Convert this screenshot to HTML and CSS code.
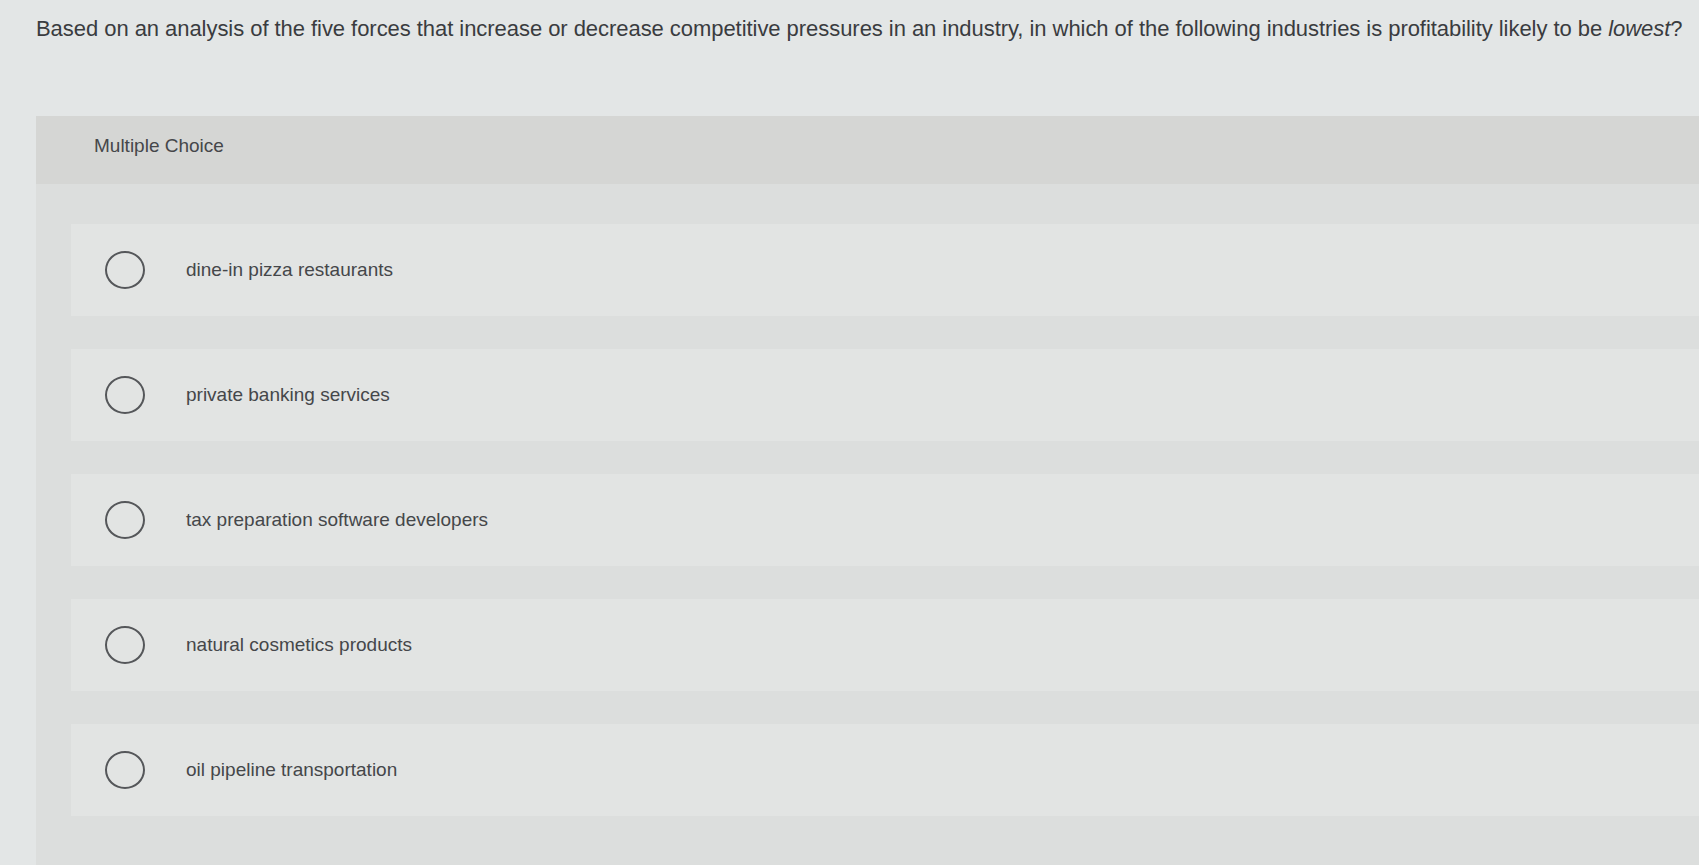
FILE: index.html
```html
<!DOCTYPE html>
<html>
<head>
<meta charset="utf-8">
<link rel="stylesheet" href="styles.css">
</head>
<body>
<div class="page">
  <p class="question">Based on an analysis of the five forces that increase or decrease competitive pressures in an industry, in which of the following industries is profitability likely to be <em>lowest</em>?</p>
  <section class="panel">
    <div class="panel-head">Multiple Choice</div>
    <div class="options">
      <div class="option"><span class="radio"></span><span class="label">dine-in pizza restaurants</span></div>
      <div class="option"><span class="radio"></span><span class="label">private banking services</span></div>
      <div class="option"><span class="radio"></span><span class="label">tax preparation software developers</span></div>
      <div class="option"><span class="radio"></span><span class="label">natural cosmetics products</span></div>
      <div class="option"><span class="radio"></span><span class="label">oil pipeline transportation</span></div>
    </div>
  </section>
</div>
</body>
</html>
```

FILE: styles.css
```css
html, body {
  margin: 0;
  padding: 0;
  height: 100%;
  overflow: hidden;
}
body {
  background: #e3e6e6;
  font-family: "Liberation Sans", Arial, sans-serif;
  color: #3c3e40;
}
.page {
  padding: 17px 0 0 36px;
}
.question {
  margin: 0;
  font-size: 22px;
  line-height: 24px;
  letter-spacing: -0.05px;
  white-space: nowrap;
  color: #3a3c3f;
}
.question em {
  font-style: italic;
}
.panel {
  margin-top: 75px;
  background: #dcdedd;
  min-height: 760px;
}
.panel-head {
  height: 60px;
  padding-bottom: 8px;
  background: #d5d6d4;
  padding-left: 58px;
  display: flex;
  align-items: center;
  font-size: 19px;
  color: #45474a;
}
.options {
  padding: 40px 0 0 35px;
  display: flex;
  flex-direction: column;
  gap: 33px;
}
.option {
  height: 92px;
  background: #e2e4e3;
  display: flex;
  align-items: center;
}
.radio {
  width: 36px;
  height: 34px;
  border: 2px solid #55575a;
  border-radius: 50%;
  margin-left: 34px;
  flex: none;
}
.label {
  margin-left: 41px;
  font-size: 19px;
  color: #45474a;
}
```
